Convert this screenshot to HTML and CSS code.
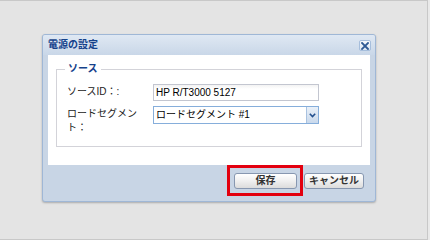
FILE: index.html
```html
<!DOCTYPE html>
<html lang="ja">
<head>
<meta charset="utf-8">
<title>電源の設定</title>
<link rel="stylesheet" href="styles.css">
</head>
<body>
<div class="screen">
  <div class="dialog">
    <div class="dlg-header">
      <span class="dlg-title">電源の設定</span>
      <span class="dlg-close">
        <svg width="8" height="8" viewBox="0 0 8 8"><path d="M1 1 L7 7 M7 1 L1 7" stroke="#2f5a94" stroke-width="1.8" stroke-linecap="square"/></svg>
      </span>
    </div>
    <div class="dlg-body">
      <fieldset class="group">
        <legend class="group-title">ソース</legend>
        <div class="row">
          <label class="field-label">ソースID：:</label>
          <div class="text-input">HP R/T3000 5127</div>
        </div>
        <div class="row">
          <label class="field-label">ロードセグメント：</label>
          <div class="select">
            <span class="select-value">ロードセグメント #1</span>
            <span class="select-arrow">
              <svg width="7" height="5" viewBox="0 0 7 5"><path d="M0.8 0.8 L3.5 3.5 L6.2 0.8" fill="none" stroke="#23508f" stroke-width="1.6"/></svg>
            </span>
          </div>
        </div>
      </fieldset>
    </div>
    <div class="dlg-footer">
      <button class="btn btn-save">保存<span class="highlight"></span></button>
      <button class="btn">キャンセル</button>
    </div>
  </div>
</div>
</body>
</html>
```
FILE: styles.css
```css
html, body {
  margin: 0;
  padding: 0;
}
body {
  background: #e9e9e9;
  font-family: "Liberation Sans", "Noto Sans CJK JP", sans-serif;
  font-size: 10px;
}
.screen {
  width: 427px;
  height: 238px;
  border: 1px solid #c8c8c8;
  border-left: none;
  background: #e4e4e4;
  padding: 33px 0 0 42px;
  box-sizing: border-box;
  height: 240px;
  width: 428px;
}
.dialog {
  width: 334px;
  height: 168px;
  box-sizing: border-box;
  border: 1px solid #9fb7d6;
  border-radius: 3px;
  background: #c8d5e5;
  box-shadow: 0 1px 2px rgba(0, 0, 0, 0.25);
  display: flex;
  flex-direction: column;
  padding: 0 5px;
}
.dlg-header {
  height: 20px;
  margin: 0 -5px;
  padding: 0 4px 0 5px;
  display: flex;
  align-items: center;
  justify-content: space-between;
  background: linear-gradient(#dfe8f3, #c9d7e8);
  border-radius: 2px 2px 0 0;
}
.dlg-title {
  font-weight: bold;
  color: #15428b;
  line-height: 12px;
}
.dlg-close {
  width: 12px;
  height: 11px;
  box-sizing: border-box;
  border: 1px solid #a6bedc;
  border-radius: 2px;
  background: linear-gradient(#f6f9fc, #dde7f3);
  display: flex;
  align-items: center;
  justify-content: center;
  margin-top: 1px;
}
.dlg-body {
  height: 110px;
  box-sizing: border-box;
  background: #fff;
  padding: 8px 8px 0;
}
.group {
  margin: 0;
  padding: 9px 10px 11px;
  border: 1px solid #d3d3d9;
  min-width: 0;
}
.group-title {
  margin-left: -2px;
  padding: 0 3px;
  font-weight: bold;
  color: #15428b;
  line-height: 12px;
}
.row {
  display: flex;
  align-items: flex-start;
  margin-bottom: 5px;
}
.row:last-child {
  margin-bottom: 0;
}
.field-label {
  width: 75px;
  margin-right: 11px;
  padding-top: 1px;
  line-height: 14px;
  color: #222;
}
.text-input {
  width: 166px;
  height: 17px;
  box-sizing: border-box;
  border: 1px solid #c3c6d0;
  background: linear-gradient(#f3f3f3, #fff 4px);
  padding: 0 2px;
  line-height: 15px;
  color: #000;
}
.select {
  width: 166px;
  height: 18px;
  box-sizing: border-box;
  border: 1px solid #86aedb;
  background: #fff;
  display: flex;
  align-items: stretch;
}
.select-value {
  flex: 1;
  padding: 0 2px;
  line-height: 16px;
  color: #000;
}
.select-arrow {
  width: 11px;
  border-left: 1px solid #a9c2e0;
  background: linear-gradient(#eaf1f9, #c9d9ec);
  display: flex;
  align-items: center;
  justify-content: center;
}
.dlg-footer {
  flex: 1;
  display: flex;
  justify-content: flex-end;
  align-items: flex-start;
  padding: 8px 6px 0 0;
  gap: 7px;
}
.btn {
  position: relative;
  height: 16px;
  box-sizing: border-box;
  border: 1px solid #8797b0;
  border-radius: 3px;
  background: linear-gradient(#ffffff, #f1f1f1 45%, #dcdcdc);
  font-family: inherit;
  font-size: 10px;
  font-weight: bold;
  color: #333;
  padding: 0;
  line-height: 14px;
  width: 60px;
}
.btn-save {
  width: 63px;
}
.highlight {
  position: absolute;
  top: -9px;
  left: -8px;
  right: -7px;
  bottom: -8px;
  border: 3px solid #e3000f;
}
```
